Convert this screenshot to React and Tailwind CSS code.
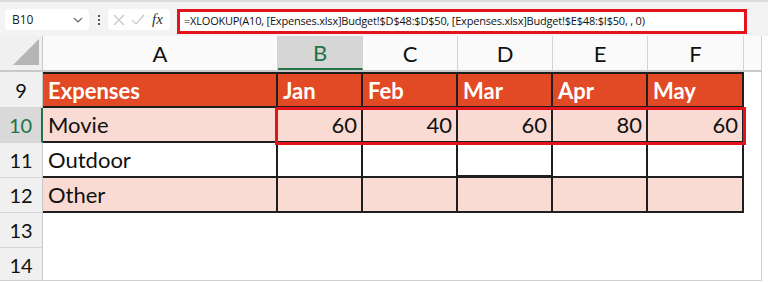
const rows = [
  { n: 9, label: "Expenses", vals: ["Jan", "Feb", "Mar", "Apr", "May"], kind: "head" },
  { n: 10, label: "Movie", vals: ["60", "40", "60", "80", "60"], kind: "pink", active: true },
  { n: 11, label: "Outdoor", vals: ["", "", "", "", ""], kind: "white" },
  { n: 12, label: "Other", vals: ["", "", "", "", ""], kind: "pink" },
];

const widths = ["w-[85px]", "w-[95px]", "w-[95px]", "w-[95px]", "w-[96px]"];
const heights = ["h-[36px]", "h-[35px]", "h-[35px]", "h-[35px]"];

function RowHeader({ n, active, h }) {
  return (
    <div
      className={`${h} w-[43px] shrink-0 flex items-center justify-center text-[20px] border-b border-[#d4d4d4] ${
        active
          ? "bg-[#d9d9d9] text-[#217346] border-r-2 border-r-[#217346]"
          : "bg-[#f0f0f0] text-[#111] border-r border-r-[#c8c8c8]"
      }`}
    >
      {n}
    </div>
  );
}

function TableRow({ row, h }) {
  const bg =
    row.kind === "head" ? "bg-[#e24a25]" : row.kind === "pink" ? "bg-[#f9dbd3]" : "bg-white";
  const text = row.kind === "head" ? "text-white font-bold text-[22px]" : "text-[#111] text-[22px]";
  return (
    <div className={`flex ${h}`}>
      <RowHeader n={row.n} active={row.active} h={h} />
      <div className={`w-[235px] shrink-0 ${bg} ${text} border-r-2 border-b-2 border-[#1f1f1f] flex items-center pl-[5px] ${row.kind === "head" ? "border-t-2" : ""}`}>
        {row.label}
      </div>
      {row.vals.map((v, i) => (
        <div
          key={i}
          className={`${widths[i]} shrink-0 ${bg} ${text} border-r-2 border-b-2 border-[#1f1f1f] flex items-center ${
            row.kind === "head" ? "border-t-2 pl-[5px]" : "justify-end pr-[4px]"
          } ${row.n === 11 && i === 2 ? "border-b-[3px]" : ""}`}
        >
          {v}
        </div>
      ))}
      <div className="flex-1" />
    </div>
  );
}

export default function App() {
  const cols = ["B", "C", "D", "E", "F"];
  return (
    <div className="w-[768px] h-[282px] bg-white overflow-hidden font-['Lato',sans-serif]">
      {/* formula bar */}
      <div className="h-[36px] bg-[#f3f3f3] border-t-2 border-[#dcdcdc] flex items-start pt-[7px] pl-[5px] font-['Open_Sans',sans-serif]">
        <div className="w-[84px] h-[21px] bg-white rounded-[4px] flex items-center justify-between pl-[7px] pr-[6px] text-[12px] text-[#222]">
          <span>B10</span>
          <svg width="10" height="6" viewBox="0 0 10 6">
            <path d="M1 1l4 4 4-4" fill="none" stroke="#666" strokeWidth="1.2" />
          </svg>
        </div>
        <div className="w-[19px] h-[21px] flex flex-col items-center justify-center gap-[2px]">
          <span className="w-[2px] h-[2px] bg-[#555]" />
          <span className="w-[2px] h-[2px] bg-[#555]" />
          <span className="w-[2px] h-[2px] bg-[#555]" />
        </div>
        <div className="w-[62px] h-[21px] bg-white rounded-[4px] flex items-center pl-[5px] gap-[6px]">
          <svg width="12" height="12" viewBox="0 0 12 12">
            <path d="M1 1l10 10M11 1L1 11" stroke="#c8c8c8" strokeWidth="1.2" />
          </svg>
          <svg width="14" height="12" viewBox="0 0 14 12">
            <path d="M1 6l4 4L13 1" fill="none" stroke="#c8c8c8" strokeWidth="1.2" />
          </svg>
          <span className="font-['Liberation_Serif',serif] italic text-[15px] leading-none text-[#333] ml-[1px]">fx</span>
        </div>
        <div className="ml-[7px] w-[570px] h-[25px] bg-white border-[3px] border-[#e3121b] flex items-center pl-[4px] text-[11px] tracking-[-0.2px] text-[#111] whitespace-nowrap">
          =XLOOKUP(A10, [Expenses.xlsx]Budget!$D$48:$D$50, [Expenses.xlsx]Budget!$E$48:$I$50, , 0)
        </div>
      </div>

      <div className="flex">
        <div className="w-[762px] h-[245px] border-r border-b border-[#d0d0d0] relative overflow-hidden">
          {/* column headers */}
          <div className="flex h-[36px] border-b-2 border-[#c9c9c9]">
            <div className="w-[43px] shrink-0 bg-[#f0f0f0] border-r border-[#c8c8c8] flex items-end justify-end pr-[3px] pb-[5px]">
              <svg width="26" height="26" viewBox="0 0 26 26">
                <path d="M26 0V26H0Z" fill="#b5b5b5" />
              </svg>
            </div>
            <div className="w-[235px] shrink-0 bg-[#fafafa] border-r border-[#d4d4d4] flex items-center justify-center text-[22px] text-[#111]">
              A
            </div>
            {cols.map((c, i) => (
              <div
                key={c}
                className={`${widths[i]} shrink-0 border-r border-[#d4d4d4] flex items-center justify-center text-[22px] ${
                  c === "B"
                    ? "bg-[#d6d6d6] text-[#217346] border-b-2 border-b-[#217346]"
                    : "bg-[#fafafa] text-[#111]"
                }`}
              >
                {c}
              </div>
            ))}
            <div className="flex-1 bg-[#fafafa]" />
          </div>

          {rows.map((r, i) => (
            <TableRow key={r.n} row={r} h={heights[i]} />
          ))}

          {[13, 14].map((n) => (
            <div key={n} className="flex h-[35px]">
              <RowHeader n={n} h="h-[35px]" />
              <div className="flex-1" />
            </div>
          ))}

          {/* selection outline */}
          <div className="absolute left-[275px] top-[71px] w-[471px] h-[38px] border-[3px] border-[#e3121b]" />
        </div>
        <div className="flex-1" />
      </div>
    </div>
  );
}
